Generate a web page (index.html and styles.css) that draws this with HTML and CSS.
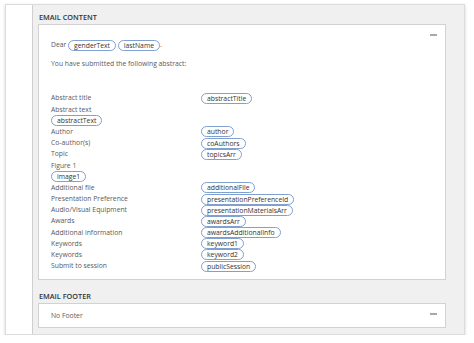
FILE: index.html
```html
<!DOCTYPE html>
<html>
<head>
<meta charset="utf-8">
<link rel="stylesheet" href="styles.css">
</head>
<body>
<div class="frame">
  <div class="side"></div>
  <div class="panel">
    <div class="section-title">EMAIL CONTENT</div>
    <div class="card content-card">
      <span class="minus"></span>
      <div class="line">Dear <span class="pill">genderText</span> <span class="pill">lastName</span>.</div>
      <div class="line intro">You have submitted the following abstract:</div>
      <div class="fields">
        <div class="label">Abstract title</div><div class="value"><span class="pill">abstractTitle</span></div>
        <div class="label wide">Abstract text</div>
        <div class="label wide"><span class="pill">abstractText</span></div>
        <div class="label">Author</div><div class="value"><span class="pill">author</span></div>
        <div class="label">Co-author(s)</div><div class="value"><span class="pill">coAuthors</span></div>
        <div class="label">Topic</div><div class="value"><span class="pill">topicsArr</span></div>
        <div class="label wide">Figure 1</div>
        <div class="label wide"><span class="pill">image1</span></div>
        <div class="label">Additional file</div><div class="value"><span class="pill">additionalFile</span></div>
        <div class="label">Presentation Preference</div><div class="value"><span class="pill">presentationPreferenceId</span></div>
        <div class="label">Audio/Visual Equipment</div><div class="value"><span class="pill">presentationMaterialsArr</span></div>
        <div class="label">Awards</div><div class="value"><span class="pill">awardsArr</span></div>
        <div class="label">Additional information</div><div class="value"><span class="pill">awardsAdditionalInfo</span></div>
        <div class="label">Keywords</div><div class="value"><span class="pill">keyword1</span></div>
        <div class="label">Keywords</div><div class="value"><span class="pill">keyword2</span></div>
        <div class="label">Submit to session</div><div class="value"><span class="pill">publicSession</span></div>
      </div>
    </div>
    <div class="section-title footer-title">EMAIL FOOTER</div>
    <div class="card footer-card">
      <span class="minus"></span>
      <div class="line">No Footer</div>
    </div>
  </div>
</div>
</body>
</html>
```
FILE: styles.css
```css
*, *::before, *::after {
  box-sizing: border-box;
}
html, body {
  margin: 0;
  padding: 0;
  background: #ffffff;
}
body {
  font-family: "Open Sans", "DejaVu Sans", sans-serif;
  font-size: 6.8px;
  color: #5a5a5a;
}
.frame {
  display: flex;
  width: 460px;
  height: 331px;
  margin: 4px 0 0 5px;
  border: 1px solid #dcdcdc;
  box-shadow: 0 1px 3px rgba(0, 0, 0, 0.18);
}
.side {
  width: 27px;
  background: #ffffff;
  border-right: 1px solid #cfcfcf;
}
.panel {
  flex: 1;
  background: #f0f0f0;
  padding: 0 18px 0 5px;
}
.section-title {
  font-size: 7.3px;
  font-weight: 600;
  color: #333333;
  line-height: 10px;
  height: 19px;
  padding: 7px 0 2px 1px;
}
.footer-title {
  height: 23px;
  padding: 11px 0 2px 1px;
}
.card {
  position: relative;
  background: #ffffff;
  border: 1px solid #d2d2d2;
  padding: 0 12px;
}
.content-card {
  height: 256px;
  padding-top: 14px;
}
.footer-card {
  height: 25px;
  display: flex;
  align-items: center;
}
.minus {
  position: absolute;
  top: 9px;
  right: 8px;
  width: 7px;
  height: 1.5px;
  background: #a8a8a8;
}
.line {
  line-height: 12px;
  height: 12px;
}
.intro {
  margin-top: 7px;
}
.fields {
  margin-top: 22.4px;
  display: grid;
  grid-template-columns: 150px 1fr;
  grid-auto-rows: 11.2px;
  align-items: center;
}
.label {
  line-height: 11.2px;
  white-space: nowrap;
}
.label.wide {
  grid-column: 1 / 3;
}
.value {
  line-height: 11.2px;
}
.pill {
  display: inline-block;
  height: 11px;
  line-height: 9px;
  padding: 0 5px;
  border: 1px solid #7fa0d0;
  border-radius: 6px;
  color: #333333;
  vertical-align: middle;
}
```
